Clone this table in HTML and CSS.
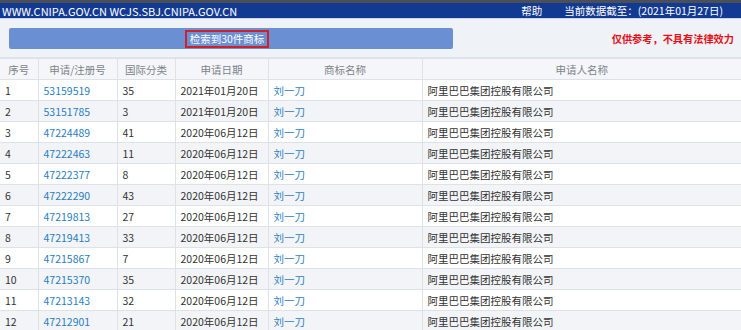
FILE: index.html
```html
<!DOCTYPE html>
<html lang="zh-CN">
<head>
<meta charset="utf-8">
<link rel="stylesheet" href="styles.css">
</head>
<body>
<div class="topline"></div>
<div class="topbar">
  <div class="sites">WWW.CNIPA.GOV.CN WCJS.SBJ.CNIPA.GOV.CN</div>
  <div class="right"><span class="help">帮助</span><span class="date">当前数据截至：(2021年01月27日)</span></div>
</div>
<div class="toolbar">
  <div class="result"><span class="count">检索到30件商标</span></div>
  <div class="note">仅供参考，不具有法律效力</div>
</div>
<table class="grid">
  <colgroup><col class="c1"><col class="c2"><col class="c3"><col class="c4"><col class="c5"><col></colgroup>
  <thead>
    <tr><th>序号</th><th>申请/注册号</th><th>国际分类</th><th>申请日期</th><th>商标名称</th><th>申请人名称</th></tr>
  </thead>
  <tbody>
    <tr><td>1</td><td class="lk">53159519</td><td>35</td><td>2021年01月20日</td><td class="lk">刘一刀</td><td>阿里巴巴集团控股有限公司</td></tr>
    <tr><td>2</td><td class="lk">53151785</td><td>3</td><td>2021年01月20日</td><td class="lk">刘一刀</td><td>阿里巴巴集团控股有限公司</td></tr>
    <tr><td>3</td><td class="lk">47224489</td><td>41</td><td>2020年06月12日</td><td class="lk">刘一刀</td><td>阿里巴巴集团控股有限公司</td></tr>
    <tr><td>4</td><td class="lk">47222463</td><td>11</td><td>2020年06月12日</td><td class="lk">刘一刀</td><td>阿里巴巴集团控股有限公司</td></tr>
    <tr><td>5</td><td class="lk">47222377</td><td>8</td><td>2020年06月12日</td><td class="lk">刘一刀</td><td>阿里巴巴集团控股有限公司</td></tr>
    <tr><td>6</td><td class="lk">47222290</td><td>43</td><td>2020年06月12日</td><td class="lk">刘一刀</td><td>阿里巴巴集团控股有限公司</td></tr>
    <tr><td>7</td><td class="lk">47219813</td><td>27</td><td>2020年06月12日</td><td class="lk">刘一刀</td><td>阿里巴巴集团控股有限公司</td></tr>
    <tr><td>8</td><td class="lk">47219413</td><td>33</td><td>2020年06月12日</td><td class="lk">刘一刀</td><td>阿里巴巴集团控股有限公司</td></tr>
    <tr><td>9</td><td class="lk">47215867</td><td>7</td><td>2020年06月12日</td><td class="lk">刘一刀</td><td>阿里巴巴集团控股有限公司</td></tr>
    <tr><td>10</td><td class="lk">47215370</td><td>35</td><td>2020年06月12日</td><td class="lk">刘一刀</td><td>阿里巴巴集团控股有限公司</td></tr>
    <tr><td>11</td><td class="lk">47213143</td><td>32</td><td>2020年06月12日</td><td class="lk">刘一刀</td><td>阿里巴巴集团控股有限公司</td></tr>
    <tr><td>12</td><td class="lk">47212901</td><td>21</td><td>2020年06月12日</td><td class="lk">刘一刀</td><td>阿里巴巴集团控股有限公司</td></tr>
  </tbody>
</table>
</body>
</html>
```

FILE: styles.css
```css
html, body {
  margin: 0;
  padding: 0;
  background: #ffffff;
  font-family: "Noto Sans CJK SC", "Noto Sans", sans-serif;
  font-size: 10.5px;
  color: #333333;
  overflow: hidden;
}
.topline {
  height: 3px;
  background: #4a4f58;
}
.topbar {
  height: 15px;
  background: #133a92;
  border-bottom: 1px solid #c9d6ee;
  display: flex;
  align-items: center;
  justify-content: space-between;
  color: #ffffff;
  padding: 0 0 0 2px;
}
.sites {
  font-size: 11px;
}
.right {
  display: flex;
  gap: 22px;
  padding-right: 18px;
}
.toolbar {
  height: 38px;
  background: #eff2f7;
  border-bottom: 1px solid #dfe4ec;
  display: flex;
  align-items: center;
  padding: 0 6px 0 9px;
}
.result {
  width: 444px;
  height: 21px;
  margin-top: 1px;
  background: #6a8fd3;
  border-radius: 2px;
  display: flex;
  align-items: center;
  justify-content: center;
}
.count {
  color: #ffffff;
  border: 2px solid #d0202a;
  padding: 0 3px;
  height: 14px;
  line-height: 14px;
  margin-right: 8px;
}
.note {
  margin-left: auto;
  margin-right: 1px;
  color: #e5101a;
  font-weight: bold;
  font-size: 10.2px;
  margin-top: 1px;
}
.grid {
  width: 741px;
  border-collapse: collapse;
  table-layout: fixed;
}
.c1 { width: 38px; }
.c2 { width: 79px; }
.c3 { width: 58px; }
.c4 { width: 93px; }
.c5 { width: 154px; }
.grid th, .grid td {
  height: 20px;
  padding: 0 5px;
  border: 1px solid #dde2e9;
  white-space: nowrap;
  overflow: hidden;
}
.grid th:first-child, .grid td:first-child { border-left: none; }
.grid th:last-child, .grid td:last-child { border-right: none; }
.grid th {
  font-weight: normal;
  color: #7d838b;
  background: #f4f6f9;
  text-align: center;
}
.grid td {
  text-align: left;
}
.grid tbody tr:nth-child(even) td {
  background: #f2f4f7;
}
.grid td.lk {
  color: #2a7ec2;
}
```
